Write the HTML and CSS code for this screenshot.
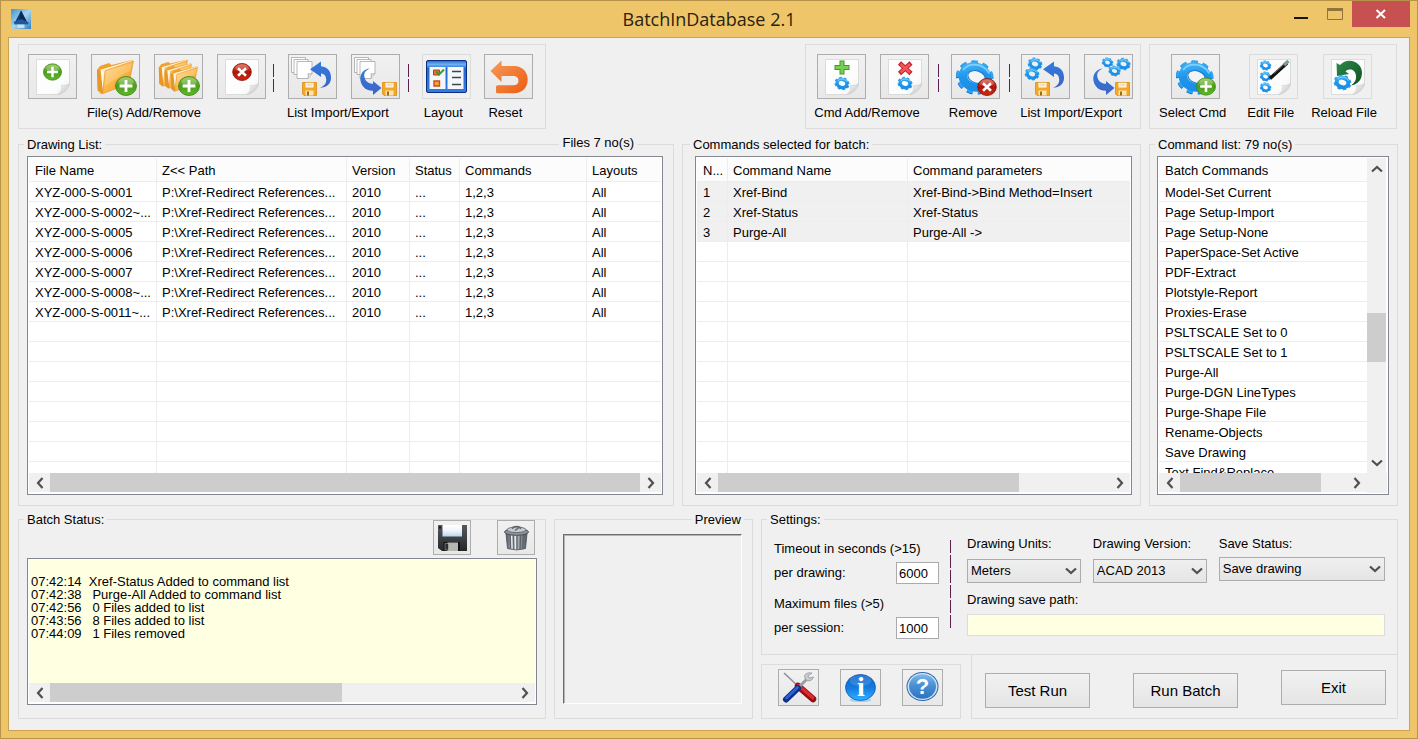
FILE: index.html
```html
<!DOCTYPE html>
<html lang="en">
<head>
<meta charset="utf-8">
<title>BatchInDatabase 2.1</title>
<link rel="stylesheet" href="styles.css">
</head>
<body>
<svg class="defs" aria-hidden="true">
  <defs>
    <linearGradient id="gGreen" x1="0" y1="0" x2="0" y2="1"><stop offset="0" stop-color="#8cc152"/><stop offset=".5" stop-color="#4c9f1c"/><stop offset="1" stop-color="#5fb82a"/></linearGradient>
    <linearGradient id="gRed" x1="0" y1="0" x2="0" y2="1"><stop offset="0" stop-color="#d9604c"/><stop offset=".5" stop-color="#b01508"/><stop offset="1" stop-color="#cf2b14"/></linearGradient>
    <linearGradient id="gPage" x1="0" y1="0" x2="1" y2="1"><stop offset="0" stop-color="#fff"/><stop offset=".7" stop-color="#fcfcfc"/><stop offset="1" stop-color="#eee"/></linearGradient>
    <linearGradient id="gCurl" x1="0" y1="0" x2="1" y2="1"><stop offset="0" stop-color="#fff"/><stop offset="1" stop-color="#bdbdbd"/></linearGradient>
    <linearGradient id="gFolder" x1="0" y1="0" x2="1" y2="1"><stop offset="0" stop-color="#ffd887"/><stop offset=".5" stop-color="#fbb545"/><stop offset="1" stop-color="#ee8e16"/></linearGradient>
    <linearGradient id="gGear" x1="0" y1="0" x2=".6" y2="1"><stop offset="0" stop-color="#49b4f5"/><stop offset=".5" stop-color="#1f97ec"/><stop offset="1" stop-color="#1b8ee6"/></linearGradient>
    <linearGradient id="gArrow" x1="0" y1="0" x2="0" y2="1"><stop offset="0" stop-color="#2f7de0"/><stop offset="1" stop-color="#3f63c4"/></linearGradient>
    <linearGradient id="gOrange" x1="0" y1="0" x2="1" y2="1"><stop offset="0" stop-color="#f79a5a"/><stop offset="1" stop-color="#ec5c12"/></linearGradient>
    <linearGradient id="gLayout" x1="0" y1="0" x2="0" y2="1"><stop offset="0" stop-color="#1f62c9"/><stop offset=".12" stop-color="#6fb2f5"/><stop offset=".25" stop-color="#2468d0"/><stop offset="1" stop-color="#2f7de8"/></linearGradient>
    <linearGradient id="gInfo" x1="0" y1="0" x2="0" y2="1"><stop offset="0" stop-color="#0f62c4"/><stop offset=".5" stop-color="#127ae0"/><stop offset="1" stop-color="#35b0ff"/></linearGradient>
    <linearGradient id="gHelp" x1="0" y1="0" x2="0" y2="1"><stop offset="0" stop-color="#7fb8ea"/><stop offset=".45" stop-color="#4a90d4"/><stop offset="1" stop-color="#2d74bf"/></linearGradient>
    <linearGradient id="gDark" x1="0" y1="0" x2="0" y2="1"><stop offset="0" stop-color="#55585d"/><stop offset="1" stop-color="#25272a"/></linearGradient>
    <linearGradient id="gLabel" x1="0" y1="0" x2="0" y2="1"><stop offset="0" stop-color="#fff"/><stop offset=".5" stop-color="#eef5fc"/><stop offset="1" stop-color="#bcd3ea"/></linearGradient>
    <linearGradient id="gMetal" x1="0" y1="0" x2="1" y2="0"><stop offset="0" stop-color="#4f565c"/><stop offset=".4" stop-color="#c9ced2"/><stop offset="1" stop-color="#50575d"/></linearGradient>
    <linearGradient id="gReload" x1="0" y1="0" x2="1" y2="1"><stop offset="0" stop-color="#2f8a4c"/><stop offset="1" stop-color="#0d5220"/></linearGradient>
    <linearGradient id="gApp" x1="0" y1="0" x2="1" y2="1"><stop offset="0" stop-color="#3f92cc"/><stop offset=".5" stop-color="#a9d4ec"/><stop offset="1" stop-color="#2c7ec0"/></linearGradient>

    <symbol id="plus" viewBox="0 0 22 20">
      <ellipse cx="11" cy="10" rx="10.5" ry="9.5" fill="url(#gGreen)" stroke="#39840f" stroke-width=".8"/>
      <ellipse cx="11" cy="5.5" rx="7.5" ry="4" fill="#fff" opacity=".22"/>
      <path d="M11 4v12M4.6 10h12.8" stroke="#fff" stroke-width="2.8"/>
    </symbol>
    <symbol id="cross" viewBox="0 0 22 20">
      <ellipse cx="11" cy="10" rx="10.3" ry="9.4" fill="url(#gRed)" stroke="#8c0f06" stroke-width="1"/>
      <ellipse cx="11" cy="5.5" rx="7.5" ry="4" fill="#fff" opacity=".2"/>
      <path d="M6.6 5.8l8.8 8.4M15.4 5.8l-8.8 8.4" stroke="#fff" stroke-width="2.8"/>
    </symbol>
    <symbol id="page" viewBox="0 0 34 36">
      <path d="M.5.5h33v25.5q-2 6-10 9.5h-23z" fill="url(#gPage)" stroke="#d4d4d4" stroke-width=".8"/>
      <path d="M33.5 24.5q-3 2.500-8 2 1.500 5-3.500 9 9-2.500 11.500-11z" fill="url(#gCurl)" stroke="#c4c4c4" stroke-width=".5"/>
    </symbol>
    <symbol id="folder" viewBox="0 0 38 36">
      <path d="M1 11l3-4 9-3 2.500 2L37 .8l-5 22L5 35 1.500 31z" fill="#f0a02c"/>
      <path d="M3 11l4-1 30-9-2 6L9 15 7 34z" fill="#fff6e0"/>
      <path d="M1 11l3.500-.5L7 34l-5-2z" fill="#e8952a"/>
      <path d="M9 11.500L37.500 2 33 24.500 6.500 34.800z" fill="url(#gFolder)" stroke="#d9851a" stroke-width=".5"/>
      <path d="M10 12.500L36 4l-1.500 8Q22 17 9 27z" fill="#fff" opacity=".2"/>
    </symbol>
    <symbol id="gear" viewBox="0 0 40 36">
      <g transform="rotate(18 20 18)">
        <ellipse cx="20" cy="18" rx="16.500" ry="13.500" fill="none" stroke="#2c9df0" stroke-width="5.500" stroke-dasharray="6.300 5.500"/>
        <ellipse cx="20" cy="18" rx="12.500" ry="10" fill="none" stroke="url(#gGear)" stroke-width="8.500"/>
        <path d="M8 15Q11 7 20 6.500q7 0 11 4" fill="none" stroke="#8fdcff" stroke-width="2" opacity=".8"/>
      </g>
    </symbol>
    <symbol id="gearBig" viewBox="0 0 40 36">
      <g transform="rotate(18 20 18)">
        <ellipse cx="20" cy="19" rx="16.500" ry="14" fill="none" stroke="#1478cf" stroke-width="5" stroke-dasharray="5.800 4.850"/>
        <ellipse cx="20" cy="18" rx="16.500" ry="14" fill="none" stroke="#30a4f3" stroke-width="5" stroke-dasharray="5.800 4.850"/>
        <ellipse cx="20" cy="18" rx="12.300" ry="10.200" fill="none" stroke="url(#gGear)" stroke-width="8.500"/>
        <ellipse cx="21.500" cy="17.500" rx="9" ry="6" fill="#f2f4f6" stroke="#1576cb" stroke-width="1"/>
        <path d="M6.500 15Q9.500 6.500 20 5.500q8 0 12.500 5" fill="none" stroke="#8ddaff" stroke-width="1.800" opacity=".8"/>
      </g>
    </symbol>
    <symbol id="disk" viewBox="0 0 15 14">
      <path d="M.5.5h14v13H2l-1.500-1.500z" fill="#f5a623" stroke="#d48806" stroke-width=".7"/>
      <path d="M3.500.8h8v4.700h-8z" fill="#fff"/><path d="M4.500 2.200h6M4.500 3.800h6" stroke="#e0b060" stroke-width=".6"/>
      <path d="M3.500 8.500h8v5h-8z" fill="#fbe3b8"/><path d="M5 9.500h2v4H5z" fill="#a46a10"/>
    </symbol>
    <symbol id="pages" viewBox="0 0 24 22">
      <g fill="#fff" stroke="#9b9b9b" stroke-width=".7"><path d="M.5.5h14v15H.5z"/><path d="M3 2.500h14v15H3z"/><path d="M6 4.500h15v12l-4 5H6z"/></g>
      <path d="M21 16.500q-2 .7-4 .2.500 2.500 0 4.800" fill="#e3e3e3" stroke="#8c8c8c" stroke-width=".6"/>
    </symbol>
    <symbol id="arrowIn" viewBox="0 0 47 43"><path d="M21 14.300L32 6.500v4.800c7 .7 10.500 6 10 12.500-.6 5.500-4.500 9-11 9 4.500-2 6.500-4.500 6.200-8.500-.3-3.800-2-5.500-5.200-5.800v3.500z" fill="url(#gArrow)"/></symbol>
    <symbol id="arrowOut" viewBox="0 0 47 43"><path d="M18 13.500c-5 2-6.500 5-5.500 9 1.200 4 4 6.200 8.500 6.300V26l8.500 7-8.500 7v-4.200C13 36 8.500 30 8.300 24 8.200 18 12 14 18 13.500z" fill="url(#gArrow)"/></symbol>
    <symbol id="chevL" viewBox="0 0 8 12"><path d="M6.500 1L2 6l4.500 5" fill="none" stroke="#505050" stroke-width="2.200"/></symbol>
    <symbol id="chevR" viewBox="0 0 8 12"><path d="M1.500 1L6 6l-4.500 5" fill="none" stroke="#505050" stroke-width="2.200"/></symbol>
    <symbol id="chevU" viewBox="0 0 12 8"><path d="M1 6.500L6 2l5 4.500" fill="none" stroke="#505050" stroke-width="2.200"/></symbol>
    <symbol id="chevD" viewBox="0 0 12 8"><path d="M1 1.500L6 6l5-4.500" fill="none" stroke="#505050" stroke-width="2.200"/></symbol>
  </defs>
</svg>

<div class="window">
  <header class="titlebar">
    <svg class="app-icon" viewBox="0 0 20 20" aria-hidden="true">
      <path d="M0 0h20v20H0z" fill="url(#gApp)"/>
      <path d="M10 1.500L3.500 14h13z" fill="#0f3f7c"/><path d="M10 1.500L8 10l2 4 6.500 0z" fill="#0a2a5c"/>
      <path d="M2.500 13l7.500-3 8 3.500-1.500 2h-13z" fill="#1d5a9c"/>
      <path d="M6.500 15.500h7v3.500h-7z" fill="#d8ecf8" opacity=".8"/>
    </svg>
    <h1 class="title">BatchInDatabase 2.1</h1>
    <div class="window-buttons">
      <button class="win-btn" aria-label="Minimize"><svg viewBox="0 0 16 14"><path d="M1 11h14" stroke="#1a1408" stroke-width="2"/></svg></button>
      <button class="win-btn" aria-label="Maximize"><svg viewBox="0 0 16 14"><path d="M.5 1.500h15v11H.5z" fill="none" stroke="#94733a"/><path d="M0 2.500h16" stroke="#94733a" stroke-width="3"/></svg></button>
      <button class="win-btn close" aria-label="Close"><svg viewBox="0 0 16 14"><path d="M3.500 3l8.500 8M12 3l-8.500 8" stroke="#fff" stroke-width="2"/></svg></button>
    </div>
  </header>

  <main class="content">
    <div class="toolbars">
      <section class="toolbar files" aria-label="File tools">
        <div class="tool">
          <div class="tool-row">
            <button class="icon-btn" aria-label="Add file"><svg viewBox="0 0 47 43"><use href="#page" x="7" y="4" width="34" height="36"/><use href="#plus" x="14" y="8" width="19" height="18"/></svg></button>
            <button class="icon-btn" aria-label="Add folder"><svg viewBox="0 0 47 43"><use href="#folder" x="4" y="4" width="38" height="36"/><use href="#plus" x="23" y="21" width="22" height="20"/></svg></button>
            <button class="icon-btn" aria-label="Add folders"><svg viewBox="0 0 47 43"><use href="#folder" x="3" y="1" width="30" height="34"/><use href="#folder" x="9" y="5" width="28" height="32"/><use href="#folder" x="15" y="9" width="28" height="30"/><use href="#plus" x="23" y="21" width="22" height="20"/></svg></button>
            <button class="icon-btn" aria-label="Remove file"><svg viewBox="0 0 47 43"><use href="#page" x="7" y="4" width="34" height="36"/><use href="#cross" x="14" y="8" width="20" height="18"/></svg></button>
          </div>
          <span class="tool-label">File(s) Add/Remove</span>
        </div>
        <span class="dash"></span>
        <div class="tool wide">
          <div class="tool-row">
            <button class="icon-btn" aria-label="Import list"><svg viewBox="0 0 47 43"><use href="#pages" x="2" y="2" width="24" height="22"/><use href="#arrowIn" width="47" height="43"/><use href="#disk" x="13" y="27" width="15" height="14"/></svg></button>
            <button class="icon-btn" aria-label="Export list"><svg viewBox="0 0 47 43"><use href="#pages" x="2" y="2" width="24" height="22"/><use href="#arrowOut" width="47" height="43"/><use href="#disk" x="30" y="27" width="15" height="14"/></svg></button>
          </div>
          <span class="tool-label">List Import/Export</span>
        </div>
        <span class="dash"></span>
        <div class="tool">
          <button class="icon-btn flat" aria-label="Layout"><svg viewBox="0 0 47 43">
            <rect x="3.500" y="5.500" width="40" height="32" rx="1.500" fill="url(#gLayout)" stroke="#0c2e80"/>
            <path d="M6.500 12h16v22h-16z" fill="#f4f8fd"/><path d="M24.500 12h16v22h-16z" fill="#f4f8fd"/>
            <path d="M10.500 15h6v5h-6z" fill="#e8743a" stroke="#a84510"/><path d="M13 16.500l3 3 5-5" fill="none" stroke="#3f9a2e" stroke-width="2"/>
            <path d="M11 26h5.500v5H11z" fill="#f7a03c" stroke="#c94f16" stroke-width="1.400"/>
            <path d="M29 16.500h9M29 22.500h9M29 29.500h9" stroke="#444" stroke-width="1.500"/>
          </svg></button>
          <span class="tool-label">Layout</span>
        </div>
        <div class="tool last">
          <button class="icon-btn" aria-label="Reset"><svg viewBox="0 0 47 43"><path d="M5.500 16L16.500 5.500V11H29c8 0 13.700 5.500 13.700 13.500S37 38.300 29 38.300H12.500q-1.500 0-1.500-1.500v-5q0-1.500 1.500-1.500H28c3.500 0 5.500-1.500 5.500-4.500S31.500 21 28 21H16.500v6z" fill="url(#gOrange)"/></svg></button>
          <span class="tool-label">Reset</span>
        </div>
      </section>

      <section class="toolbar compact" aria-label="Command tools">
        <div class="tool wide">
          <div class="tool-row">
            <button class="icon-btn" aria-label="Add command"><svg viewBox="0 0 47 43"><use href="#page" x="7" y="4" width="34" height="36"/><path d="M24 5.500v14M16.500 12.500h15" stroke="#3c9c28" stroke-width="5"/><path d="M24 6.500v12M17.500 12.500h13" stroke="#78d052" stroke-width="3"/><use href="#gear" x="16" y="21" width="16" height="15"/></svg></button>
            <button class="icon-btn" aria-label="Remove command"><svg viewBox="0 0 47 43"><use href="#page" x="7" y="4" width="34" height="36"/><path d="M18.500 8L30 18.500M30 8L18.500 18.500" stroke="#c8202a" stroke-width="4.500"/><path d="M19.500 9L29 17.500M29 9l-9.500 8.500" stroke="#f0585c" stroke-width="2.400"/><use href="#gear" x="16" y="21" width="16" height="15"/></svg></button>
          </div>
          <span class="tool-label">Cmd Add/Remove</span>
        </div>
        <span class="dash"></span>
        <div class="tool">
          <button class="icon-btn" aria-label="Remove"><svg viewBox="0 0 47 43"><use href="#gearBig" x="3" y="4" width="40" height="36"/><use href="#cross" x="25" y="23" width="20" height="18"/></svg></button>
          <span class="tool-label">Remove</span>
        </div>
        <span class="dash"></span>
        <div class="tool wide">
          <div class="tool-row">
            <button class="icon-btn" aria-label="Import command list"><svg viewBox="0 0 47 43"><use href="#gear" x="5" y="2" width="16" height="14"/><use href="#gear" x="2" y="12" width="16" height="14"/><use href="#arrowIn" width="47" height="43"/><use href="#disk" x="13" y="27" width="15" height="14"/></svg></button>
            <button class="icon-btn" aria-label="Export command list"><svg viewBox="0 0 47 43"><use href="#gear" x="16" y="2" width="13" height="11"/><use href="#gear" x="31" y="2" width="15" height="14"/><use href="#gear" x="23" y="10" width="13" height="12"/><use href="#arrowOut" width="47" height="43"/><use href="#disk" x="30" y="27" width="15" height="14"/></svg></button>
          </div>
          <span class="tool-label">List Import/Export</span>
        </div>
      </section>

      <section class="toolbar even" aria-label="Command file tools">
        <div class="tool first">
          <button class="icon-btn" aria-label="Select Cmd"><svg viewBox="0 0 47 43"><use href="#gearBig" x="3" y="4" width="40" height="36"/><use href="#plus" x="24" y="22" width="20" height="19"/></svg></button>
          <span class="tool-label">Select Cmd</span>
        </div>
        <div class="tool">
          <button class="icon-btn flat" aria-label="Edit File"><svg viewBox="0 0 47 43"><use href="#page" x="7" y="4" width="34" height="36"/><use href="#gear" x="9" y="5" width="13" height="11"/><use href="#gear" x="9" y="16" width="13" height="11"/><use href="#gear" x="9" y="27" width="13" height="11"/><path d="M20 23.500L37 8" stroke="#111" stroke-width="3.500"/><path d="M34 10l4.500-4" stroke="#7d9a9c" stroke-width="3.500"/><path d="M24 18.500L34 9.500" stroke="#777" stroke-width=".8"/></svg></button>
          <span class="tool-label">Edit File</span>
        </div>
        <div class="tool">
          <button class="icon-btn flat" aria-label="Reload File"><svg viewBox="0 0 47 43"><use href="#page" x="7" y="4" width="34" height="36"/><path d="M12.500 8l3.500 2C20 5.500 26 4.500 31 7c6 3 8 8.500 6.500 14.500-1.300 5-5 8-10.500 9 4-3 5.500-6 5-10-.6-4-3-6.500-6.500-6-2 .2-3 .8-4 2l3.500 2.500-12 2z" fill="url(#gReload)"/><use href="#gear" x="9" y="19" width="19" height="17"/></svg></button>
          <span class="tool-label">Reload File</span>
        </div>
      </section>
    </div>

    <div class="lists">
      <section class="group">
        <h2 class="caption">Drawing List:</h2>
        <p class="caption count">Files 7 no(s)</p>
        <div class="listbox">
          <div class="viewport">
            <table class="grid">
              <colgroup><col class="w-file"><col class="w-path"><col class="w-version"><col class="w-status"><col class="w-cmds"><col></colgroup>
              <thead><tr><th>File Name</th><th>Z&lt;&lt; Path</th><th>Version</th><th>Status</th><th>Commands</th><th>Layouts</th></tr></thead>
              <tbody>
                <tr><td>XYZ-000-S-0001</td><td>P:\Xref-Redirect References...</td><td>2010</td><td>...</td><td>1,2,3</td><td>All</td></tr>
                <tr><td>XYZ-000-S-0002~...</td><td>P:\Xref-Redirect References...</td><td>2010</td><td>...</td><td>1,2,3</td><td>All</td></tr>
                <tr><td>XYZ-000-S-0005</td><td>P:\Xref-Redirect References...</td><td>2010</td><td>...</td><td>1,2,3</td><td>All</td></tr>
                <tr><td>XYZ-000-S-0006</td><td>P:\Xref-Redirect References...</td><td>2010</td><td>...</td><td>1,2,3</td><td>All</td></tr>
                <tr><td>XYZ-000-S-0007</td><td>P:\Xref-Redirect References...</td><td>2010</td><td>...</td><td>1,2,3</td><td>All</td></tr>
                <tr><td>XYZ-000-S-0008~...</td><td>P:\Xref-Redirect References...</td><td>2010</td><td>...</td><td>1,2,3</td><td>All</td></tr>
                <tr><td>XYZ-000-S-0011~...</td><td>P:\Xref-Redirect References...</td><td>2010</td><td>...</td><td>1,2,3</td><td>All</td></tr>
                <tr><td></td><td></td><td></td><td></td><td></td><td></td></tr>
                <tr><td></td><td></td><td></td><td></td><td></td><td></td></tr>
                <tr><td></td><td></td><td></td><td></td><td></td><td></td></tr>
                <tr><td></td><td></td><td></td><td></td><td></td><td></td></tr>
                <tr><td></td><td></td><td></td><td></td><td></td><td></td></tr>
                <tr><td></td><td></td><td></td><td></td><td></td><td></td></tr>
                <tr><td></td><td></td><td></td><td></td><td></td><td></td></tr>
                <tr><td></td><td></td><td></td><td></td><td></td><td></td></tr>
              </tbody>
            </table>
          </div>
          <div class="hscroll">
            <button class="arrow" aria-label="Scroll left"><svg viewBox="0 0 8 12"><use href="#chevL"/></svg></button>
            <div class="track"><div class="thumb" style="width:100%"></div></div>
            <button class="arrow" aria-label="Scroll right"><svg viewBox="0 0 8 12"><use href="#chevR"/></svg></button>
          </div>
        </div>
      </section>

      <section class="group selected">
        <h2 class="caption">Commands selected for batch:</h2>
        <div class="listbox">
          <div class="viewport">
            <table class="grid">
              <colgroup><col class="w-num"><col class="w-name"><col></colgroup>
              <thead><tr><th>N...</th><th>Command Name</th><th>Command parameters</th></tr></thead>
              <tbody>
                <tr class="on"><td>1</td><td>Xref-Bind</td><td>Xref-Bind-&gt;Bind Method=Insert</td></tr>
                <tr class="on"><td>2</td><td>Xref-Status</td><td>Xref-Status</td></tr>
                <tr class="on"><td>3</td><td>Purge-All</td><td>Purge-All -&gt;</td></tr>
                <tr><td></td><td></td><td></td></tr>
                <tr><td></td><td></td><td></td></tr>
                <tr><td></td><td></td><td></td></tr>
                <tr><td></td><td></td><td></td></tr>
                <tr><td></td><td></td><td></td></tr>
                <tr><td></td><td></td><td></td></tr>
                <tr><td></td><td></td><td></td></tr>
                <tr><td></td><td></td><td></td></tr>
                <tr><td></td><td></td><td></td></tr>
                <tr><td></td><td></td><td></td></tr>
                <tr><td></td><td></td><td></td></tr>
                <tr><td></td><td></td><td></td></tr>
              </tbody>
            </table>
          </div>
          <div class="hscroll">
            <button class="arrow" aria-label="Scroll left"><svg viewBox="0 0 8 12"><use href="#chevL"/></svg></button>
            <div class="track"><div class="thumb" style="width:77%"></div></div>
            <button class="arrow" aria-label="Scroll right"><svg viewBox="0 0 8 12"><use href="#chevR"/></svg></button>
          </div>
        </div>
      </section>

      <section class="group commands">
        <h2 class="caption">Command list: 79 no(s)</h2>
        <div class="listbox both">
          <div class="viewport">
            <table class="grid">
              <thead><tr><th>Batch Commands</th></tr></thead>
              <tbody>
                <tr><td>Model-Set Current</td></tr>
                <tr><td>Page Setup-Import</td></tr>
                <tr><td>Page Setup-None</td></tr>
                <tr><td>PaperSpace-Set Active</td></tr>
                <tr><td>PDF-Extract</td></tr>
                <tr><td>Plotstyle-Report</td></tr>
                <tr><td>Proxies-Erase</td></tr>
                <tr><td>PSLTSCALE Set to 0</td></tr>
                <tr><td>PSLTSCALE Set to 1</td></tr>
                <tr><td>Purge-All</td></tr>
                <tr><td>Purge-DGN LineTypes</td></tr>
                <tr><td>Purge-Shape File</td></tr>
                <tr><td>Rename-Objects</td></tr>
                <tr><td>Save Drawing</td></tr>
                <tr><td>Text Find&amp;Replace</td></tr>
              </tbody>
            </table>
          </div>
          <div class="vscroll">
            <button class="arrow" aria-label="Scroll up"><svg viewBox="0 0 12 8"><use href="#chevU"/></svg></button>
            <div class="track"><div class="thumb" style="height:18%;top:49%"></div></div>
            <button class="arrow" aria-label="Scroll down"><svg viewBox="0 0 12 8"><use href="#chevD"/></svg></button>
          </div>
          <div class="hscroll">
            <button class="arrow" aria-label="Scroll left"><svg viewBox="0 0 8 12"><use href="#chevL"/></svg></button>
            <div class="track"><div class="thumb" style="width:85%"></div></div>
            <button class="arrow" aria-label="Scroll right"><svg viewBox="0 0 8 12"><use href="#chevR"/></svg></button>
          </div>
          <div class="corner"></div>
        </div>
      </section>
    </div>

    <div class="bottom">
      <section class="group status">
        <h2 class="caption">Batch Status:</h2>
        <div class="status-tools">
          <button class="icon-btn small" aria-label="Save log"><svg viewBox="0 0 36 33">
            <path d="M4 4h29v26H8l-4-3z" fill="url(#gDark)"/><path d="M8.500 4H28v11.500H8.500z" fill="url(#gLabel)"/>
            <path d="M9.500 21H26v9H9.500z" fill="#101214"/><path d="M13.500 21.500H24V30H13.500z" fill="#b4b6b2"/><path d="M11 22.500h3.500V29H11z" fill="#2b2d30" stroke="#ddd" stroke-width=".4"/>
            <path d="M5 5.500h2v2H5z" fill="#111"/></svg></button>
          <button class="icon-btn small" aria-label="Clear log"><svg viewBox="0 0 36 33">
            <path d="M8 12.500h21l-1.500 15q-9 3-18 0z" fill="url(#gMetal)" stroke="#4b5258" stroke-width=".8"/>
            <path d="M12 14l.7 13M15.500 14.500l.3 13.500M19 14.500v14M22.500 14.500l-.4 13.500M25.500 14l-.8 13" stroke="#5d656b" stroke-width="1.300"/>
            <path d="M13.500 14.500l.5 13M17.200 14.500l.2 13.500" stroke="#f0f2f3" stroke-width="1"/>
            <ellipse cx="18.500" cy="11" rx="12" ry="3.300" fill="#8d959b" stroke="#454c52"/>
            <ellipse cx="18.500" cy="8.800" rx="9.500" ry="2.800" fill="#c3c9cd" stroke="#596168" stroke-width=".8"/>
            <path d="M14.500 8q0-2.500 4-2.500t4 2.500M17 9.500l4-3" fill="none" stroke="#5f676d" stroke-width="1.400"/></svg></button>
        </div>
        <div class="listbox log">
          <textarea class="log-text" aria-label="Batch status log" readonly wrap="off">

07:42:14  Xref-Status Added to command list
07:42:38   Purge-All Added to command list
07:42:56   0 Files added to list
07:43:56   8 Files added to list
07:44:09   1 Files removed</textarea>
          <div class="hscroll">
            <button class="arrow" aria-label="Scroll left"><svg viewBox="0 0 8 12"><use href="#chevL"/></svg></button>
            <div class="track"><div class="thumb" style="width:63%"></div></div>
            <button class="arrow" aria-label="Scroll right"><svg viewBox="0 0 8 12"><use href="#chevR"/></svg></button>
          </div>
        </div>
      </section>

      <section class="group preview">
        <h2 class="caption end">Preview</h2>
        <div class="preview-pane"></div>
      </section>

      <div class="side">
        <section class="group settings">
          <h2 class="caption">Settings:</h2>
          <div class="limits">
            <span class="lead">Timeout in seconds (&gt;15)</span>
            <label for="timeout">per drawing:</label><input id="timeout" class="num" type="text" value="6000">
            <span class="lead next">Maximum files (&gt;5)</span>
            <label for="maxfiles">per session:</label><input id="maxfiles" class="num" type="text" value="1000">
          </div>
          <span class="dash tall"></span>
          <div class="options">
            <div class="field"><label for="units">Drawing Units:</label>
              <span class="combo"><select id="units"><option>Meters</option></select><svg viewBox="0 0 12 8"><use href="#chevD"/></svg></span></div>
            <div class="field"><label for="version">Drawing Version:</label>
              <span class="combo"><select id="version"><option>ACAD 2013</option></select><svg viewBox="0 0 12 8"><use href="#chevD"/></svg></span></div>
            <div class="field snug"><label for="save">Save Status:</label>
              <span class="combo"><select id="save"><option>Save drawing</option></select><svg viewBox="0 0 12 8"><use href="#chevD"/></svg></span></div>
            <div class="field path"><label for="path">Drawing save path:</label><input id="path" class="path-input" type="text"></div>
          </div>
        </section>
        <div class="footer">
          <section class="group help" aria-label="Tools and help">
            <button class="icon-btn medium" aria-label="Tools"><svg viewBox="0 0 39 35">
              <path d="M5 3l14 13" stroke="#8d9094" stroke-width="1.600"/><path d="M19 16l15 13" stroke="#8c1014" stroke-width="6.500" stroke-linecap="round"/><path d="M19.500 15.500l14 12" stroke="#e0282e" stroke-width="3.500" stroke-linecap="round"/>
              <path d="M20 17l8-8" stroke="#9a9ea3" stroke-width="3"/><path d="M33 3q-6-1-7.500 3 0 4 3.500 5 4.500 0 5.500-4l-4.500 1-1-2z" fill="#c9ccd0" stroke="#8a8d92" stroke-width=".7"/>
              <path d="M19 18L7 29.500" stroke="#0d2f8a" stroke-width="6" stroke-linecap="round"/><path d="M18.500 17.500l-11 10.500" stroke="#2c62d8" stroke-width="2.800" stroke-linecap="round"/></svg></button>
            <button class="icon-btn medium" aria-label="About"><svg viewBox="0 0 39 35">
              <ellipse cx="19.500" cy="30" rx="11" ry="2" fill="#9fd0f2"/><ellipse cx="19.500" cy="17.500" rx="15" ry="13" fill="url(#gInfo)" stroke="#0d58ae" stroke-width=".8"/><ellipse cx="19.500" cy="10.500" rx="11" ry="5.500" fill="#fff" opacity=".14"/>
              <text x="20" y="26" text-anchor="middle" class="glyph-i">i</text></svg></button>
            <button class="icon-btn medium" aria-label="Help"><svg viewBox="0 0 39 35">
              <ellipse cx="19.500" cy="16.500" rx="16" ry="14.500" fill="#2c66aa"/><ellipse cx="19.500" cy="16.500" rx="15" ry="13.500" fill="#cfe4f6"/><ellipse cx="19.500" cy="16.500" rx="13.500" ry="12.200" fill="url(#gHelp)"/>
              <text x="19.500" y="24" text-anchor="middle" class="glyph-q">?</text></svg></button>
          </section>
          <section class="group actions" aria-label="Actions">
            <button class="push">Test Run</button>
            <button class="push">Run Batch</button>
            <button class="push raised">Exit</button>
          </section>
        </div>
      </div>
    </div>
  </main>
</div>
</body>
</html>
```
FILE: styles.css
```css
:root {
  --face: #f0f0f0;
  --gold: #efc569;
  --line: #dcdcdc;
  --edge: #828790;
  --rule: #ededed;
  --button-edge: #adadad;
  --note: #ffffe1;
}

* {
  box-sizing: border-box;
}

body {
  margin: 0;
  font: 13px/16px "Liberation Sans", Arial, sans-serif;
  color: #000;
}

button,
input,
select,
textarea {
  font: inherit;
  color: inherit;
  margin: 0;
}

h1,
h2,
p {
  margin: 0;
  font-size: 13px;
  font-weight: normal;
}

.defs {
  position: absolute;
  width: 0;
  height: 0;
}

/* Window frame */
.window {
  display: flex;
  flex-direction: column;
  height: 100vh;
  min-height: 640px;
  min-width: 1240px;
  padding: 0 7px 7px;
  border: 1px solid #b8944a;
  background: var(--gold);
}

.titlebar {
  display: grid;
  grid-template-columns: 1fr auto 1fr;
  align-items: center;
  height: 36px;
}

.app-icon {
  width: 20px;
  height: 20px;
  margin-left: 3px;
}

.title {
  font: 18px/24px "Open Sans", "Noto Sans", sans-serif;
  color: #2b2210;
}

.window-buttons {
  display: flex;
  align-self: start;
  justify-content: flex-end;
}

.win-btn {
  display: flex;
  align-items: center;
  justify-content: center;
  width: 34px;
  height: 26px;
  padding: 0;
  border: 0;
  background: none;
}

.win-btn svg {
  width: 16px;
  height: 14px;
}

.win-btn.close {
  width: 58px;
  background: #c75050;
}

.content {
  flex: 1;
  display: flex;
  flex-direction: column;
  min-height: 0;
  padding: 6px 11px 11px 9px;
  border: 1px solid #c9a352;
  background: var(--face);
}

/* Toolbars */
.toolbars {
  display: flex;
  gap: 8px;
  padding-right: 1px;
}

.toolbar {
  display: flex;
  align-items: flex-start;
  padding: 9px 6px 7px 9px;
  border: 1px solid var(--line);
}

.toolbar.files {
  margin-right: auto;
  padding-right: 12px;
}

.toolbar.compact {
  padding-left: 8px;
  padding-right: 6px;
}

.toolbar.even {
  gap: 11px;
  padding: 9px 13px 7px 9px;
}

.tool {
  display: flex;
  flex-direction: column;
  align-items: center;
  gap: 6px;
}

.tool.first {
  margin-right: 4px;
}

.tool.last {
  margin-left: 13px;
}

.tool-row {
  display: flex;
  gap: 14px;
}

.tool-label {
  padding-right: 6px;
  white-space: nowrap;
}

.tool.wide .tool-label {
  padding-right: 12px;
}

.icon-btn {
  width: 49px;
  height: 45px;
  padding: 0;
  border: 1px solid var(--button-edge);
  background: linear-gradient(#f1f1f1, #e8e8e8);
}

.icon-btn.flat {
  border-color: var(--line);
  background: var(--face);
}

.icon-btn.small {
  width: 38px;
  height: 35px;
}

.icon-btn.medium {
  width: 41px;
  height: 37px;
}

.icon-btn svg {
  display: block;
  width: 100%;
  height: 100%;
}

.dash {
  flex: none;
  width: 1px;
  height: 28px;
  margin: 10px 13px 0 7px;
  background: repeating-linear-gradient(#5c2050 0 13px, transparent 13px 15px);
}

.toolbar.compact .dash {
  margin: 10px 10px 0 6px;
}

/* Framed groups */
.group {
  position: relative;
  border: 1px solid var(--line);
}

.caption {
  position: absolute;
  top: -8px;
  left: 5px;
  padding: 0 3px;
  background: var(--face);
}

.caption.count {
  top: -10px;
  left: auto;
  right: 36px;
}

.caption.end {
  left: auto;
  right: 8px;
}

.lists {
  flex: 1;
  display: grid;
  grid-template-columns: 656fr 459fr 249fr;
  grid-template-rows: minmax(0, 1fr);
  gap: 8px;
  min-height: 0;
  margin: 15px 0 13px;
}

.lists .group {
  display: flex;
  padding: 11px 10px 10px 8px;
}

.lists .group.selected {
  padding-left: 12px;
  padding-right: 8px;
}

.lists .group.commands {
  padding-left: 7px;
  padding-right: 8px;
}

.group.selected .caption {
  left: 7px;
}

/* List boxes */
.listbox {
  flex: 1;
  display: flex;
  flex-direction: column;
  min-width: 0;
  padding: 1px;
  border: 1px solid var(--edge);
  background: #fff;
}

.listbox.both {
  display: grid;
  grid-template-columns: minmax(0, 1fr) 20px;
  grid-template-rows: minmax(0, 1fr) auto;
}

.viewport {
  flex: 1;
  min-height: 0;
  overflow: hidden;
}

.grid {
  width: 100%;
  table-layout: fixed;
  border-collapse: separate;
  border-spacing: 0;
}

.grid th,
.grid td {
  height: 20px;
  padding: 2px 0 0 5px;
  border-right: 1px solid var(--rule);
  border-bottom: 1px solid var(--rule);
  font-weight: normal;
  text-align: left;
  white-space: nowrap;
  overflow: hidden;
}

.grid th {
  height: 24px;
  background: #fcfcfc;
}

.grid th:first-child,
.grid td:first-child {
  padding-left: 6px;
}

.grid th:last-child,
.grid td:last-child {
  border-right: 0;
}

.grid .on td {
  background: var(--face);
}

.w-file { width: 128px; }
.w-path { width: 190px; }
.w-version { width: 63px; }
.w-status { width: 50px; }
.w-cmds { width: 127px; }
.w-num { width: 31px; }
.w-name { width: 180px; }

/* Scroll bars */
.hscroll {
  display: flex;
  height: 20px;
  border-bottom: 1px solid #fff;
  background: var(--face);
}

.vscroll {
  display: flex;
  flex-direction: column;
  border-right: 1px solid #fff;
  background: var(--face);
}

.track {
  position: relative;
  flex: 1;
}

.thumb {
  background: #cdcdcd;
}

.hscroll .thumb {
  height: 100%;
}

.vscroll .thumb {
  position: absolute;
  width: 100%;
}

.arrow {
  display: flex;
  align-items: center;
  justify-content: center;
  width: 21px;
  padding: 0;
  border: 0;
  background: none;
}

.vscroll .arrow {
  width: 100%;
  height: 21px;
}

.hscroll .arrow svg {
  width: 8px;
  height: 12px;
}

.vscroll .arrow svg {
  width: 12px;
  height: 8px;
}

.corner {
  background: var(--face);
}

/* Bottom row */
.bottom {
  display: grid;
  grid-template-columns: 528fr 199fr 637fr;
  gap: 8px;
}

.status {
  display: flex;
  flex-direction: column;
  padding: 0 8px 13px;
}

.status-tools {
  display: flex;
  justify-content: flex-end;
  gap: 26px;
  padding: 0 2px 3px;
}

.log-text {
  flex: 1;
  display: block;
  width: 100%;
  min-height: 123px;
  padding: 2px;
  border: 0;
  outline: 0;
  resize: none;
  overflow: hidden;
  line-height: 13px;
  background: var(--note);
}

.preview {
  display: flex;
  padding: 14px 10px 14px 8px;
}

.preview-pane {
  flex: 1;
  border: 1px solid;
  border-color: #6e6e6e #fff #fff #6e6e6e;
  box-shadow: inset 1px 1px #b4b4b4;
}

.side {
  display: flex;
  flex-direction: column;
}

.settings {
  display: flex;
  padding: 20px 12px 15px;
}

.limits {
  display: grid;
  grid-template-columns: 1fr 43px;
  align-items: center;
  align-content: start;
  width: 165px;
}

.lead {
  grid-column: 1 / -1;
  padding: 1px 0 5px;
}

.lead.next {
  padding-top: 12px;
}

.num {
  width: 43px;
  height: 22px;
  padding: 0 2px;
  border: 1px solid #ababab;
  background: #fff;
}

.dash.tall {
  height: 88px;
  margin: 0 16px 0 11px;
}

.options {
  flex: 1;
  display: grid;
  grid-template-columns: 113fr 113fr 165fr;
  gap: 9px 12px;
  align-content: start;
  margin-top: -4px;
}

.field {
  display: flex;
  flex-direction: column;
  gap: 7px;
}

.field.snug {
  gap: 5px;
}

.field.path {
  grid-column: 1 / -1;
  gap: 6px;
}

.combo {
  position: relative;
  display: block;
}

.combo select {
  display: block;
  width: 100%;
  height: 24px;
  padding: 0 3px;
  border: 1px solid #acacac;
  border-radius: 0;
  appearance: none;
  background: linear-gradient(#f0f0f0, #e5e5e5);
}

.combo svg {
  position: absolute;
  top: 8px;
  right: 4px;
  width: 12px;
  height: 8px;
  pointer-events: none;
}

.path-input {
  height: 22px;
  border: 1px solid var(--line);
  background: var(--note);
}

.footer {
  flex: 1;
  display: flex;
  gap: 10px;
}

.help {
  display: flex;
  align-items: flex-start;
  gap: 21px;
  width: 200px;
  margin-top: 9px;
  padding: 4px 16px;
}

.actions {
  flex: 1;
  display: flex;
  align-items: flex-end;
  justify-content: space-between;
  margin-top: -1px;
  padding: 15px 11px 10px 13px;
}

.push {
  width: 105px;
  height: 35px;
  padding: 0;
  border: 1px solid var(--button-edge);
  background: linear-gradient(#f1f1f1, #e5e5e5);
  font-size: 15px;
}

.push.raised {
  align-self: flex-start;
}

.glyph-i {
  font: bold 28px "Liberation Serif", serif;
  fill: #fff;
}

.glyph-q {
  font: bold 22px "Liberation Sans", sans-serif;
  fill: #fff;
}
```
